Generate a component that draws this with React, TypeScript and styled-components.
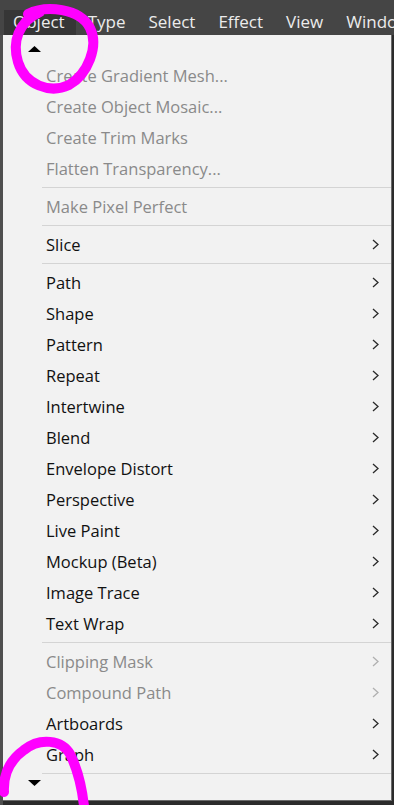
import React from "react";
import styled, { createGlobalStyle } from "styled-components";

const GlobalStyle = createGlobalStyle`
  html, body {
    margin: 0;
    padding: 0;
    background: #2b2b2b;
  }
  body {
    font-family: "Open Sans", "Noto Sans", sans-serif;
  }
`;

type Item = {
  label: string;
  disabled?: boolean;
  submenu?: boolean;
};

type Entry = Item | "sep";

const topItems = ["Object", "Type", "Select", "Effect", "View", "Windo"];

const entries: Entry[] = [
  { label: "Create Gradient Mesh...", disabled: true },
  { label: "Create Object Mosaic...", disabled: true },
  { label: "Create Trim Marks", disabled: true },
  { label: "Flatten Transparency...", disabled: true },
  "sep",
  { label: "Make Pixel Perfect", disabled: true },
  "sep",
  { label: "Slice", submenu: true },
  "sep",
  { label: "Path", submenu: true },
  { label: "Shape", submenu: true },
  { label: "Pattern", submenu: true },
  { label: "Repeat", submenu: true },
  { label: "Intertwine", submenu: true },
  { label: "Blend", submenu: true },
  { label: "Envelope Distort", submenu: true },
  { label: "Perspective", submenu: true },
  { label: "Live Paint", submenu: true },
  { label: "Mockup (Beta)", submenu: true },
  { label: "Image Trace", submenu: true },
  { label: "Text Wrap", submenu: true },
  "sep",
  { label: "Clipping Mask", disabled: true, submenu: true },
  { label: "Compound Path", disabled: true, submenu: true },
  { label: "Artboards", submenu: true },
  { label: "Graph", submenu: true },
  "sep",
];

const Screen = styled.div`
  position: relative;
  width: 394px;
  height: 805px;
  overflow: hidden;
  background: #2b2b2b;
`;

const MenuBar = styled.div`
  display: flex;
  align-items: flex-end;
  height: 35px;
  padding-left: 4px;
  background: #454545;
  white-space: nowrap;
  overflow: hidden;
`;

const BarItem = styled.div<{ $active?: boolean }>`
  flex: none;
  height: 25px;
  padding: 0 11px 3px 9px;
  box-sizing: border-box;
  display: flex;
  align-items: center;
  color: #ececec;
  font-size: 17px;
  line-height: 1;
  background: ${({ $active }) => ($active ? "#363636" : "transparent")};
  & + & {
    margin-left: 3px;
  }
`;

const Body = styled.div`
  display: flex;
  height: 770px;
`;

const LeftStrip = styled.div`
  width: 3px;
  background: #4f4f4f;
`;

const Panel = styled.div`
  width: 388px;
  height: 765px;
  background: #f2f2f2;
  border-right: 1px solid #6a6a6a;
  border-bottom: 1px solid #6a6a6a;
  display: flex;
  flex-direction: column;
`;

const ScrollRow = styled.div<{ $down?: boolean }>`
  height: ${({ $down }) => ($down ? "22px" : "25px")};
  display: flex;
  align-items: ${({ $down }) => ($down ? "flex-start" : "center")};
  padding-left: 25px;
  padding-top: 3px;
  box-sizing: border-box;
`;

const Row = styled.div<{ $disabled?: boolean }>`
  height: 31px;
  flex: none;
  display: flex;
  align-items: center;
  justify-content: space-between;
  padding: 0 12px 0 43px;
  font-size: 16.5px;
  color: ${({ $disabled }) => ($disabled ? "#8a8a8a" : "#111111")};
`;

const Separator = styled.div`
  flex: none;
  height: 1px;
  margin: 3px 0 3px 39px;
  background: #d4d4d4;
`;

const Chevron = ({ disabled }: { disabled?: boolean }) => (
  <svg width="7" height="11" viewBox="0 0 7 11">
    <path
      d="M1 1 L6 5.5 L1 10"
      fill="none"
      stroke={disabled ? "#b0b0b0" : "#2a2a2a"}
      strokeWidth="1.3"
    />
  </svg>
);

const Triangle = ({ down }: { down?: boolean }) => (
  <svg width="13" height="6" viewBox="0 0 13 6">
    <path d={down ? "M0 0 H13 L6.5 6 Z" : "M0 6 H13 L6.5 0 Z"} fill="#000" />
  </svg>
);

// hand-drawn highlight rings that sit over the screenshot
const Scribble = styled.svg`
  position: absolute;
  left: 0;
  top: 0;
  pointer-events: none;
`;

export default function App() {
  return (
    <>
      <GlobalStyle />
      <Screen>
        <MenuBar>
          {topItems.map((t, i) => (
            <BarItem key={t} $active={i === 0}>
              {t}
            </BarItem>
          ))}
        </MenuBar>
        <Body>
          <LeftStrip />
          <Panel>
            <ScrollRow>
              <Triangle />
            </ScrollRow>
            {entries.map((e, i) =>
              e === "sep" ? (
                <Separator key={i} />
              ) : (
                <Row key={i} $disabled={e.disabled}>
                  <span>{e.label}</span>
                  {e.submenu && <Chevron disabled={e.disabled} />}
                </Row>
              )
            )}
            <ScrollRow $down>
              <Triangle down />
            </ScrollRow>
          </Panel>
        </Body>
        <Scribble width="394" height="805" viewBox="0 0 394 805">
          <path
            d="M28 14 C46 5 80 8 90 28 C99 46 88 74 69 85 C50 94 25 85 18 62 C12 42 18 22 40 12"
            fill="none"
            stroke="#ff00ff"
            strokeWidth="10"
            strokeLinecap="round"
          />
          <path
            d="M24 750 C40 737 62 740 70 754 C78 770 82 788 84 806 M4 792 C3 774 10 760 24 750"
            fill="none"
            stroke="#ff00ff"
            strokeWidth="10"
            strokeLinecap="round"
          />
        </Scribble>
      </Screen>
    </>
  );
}
